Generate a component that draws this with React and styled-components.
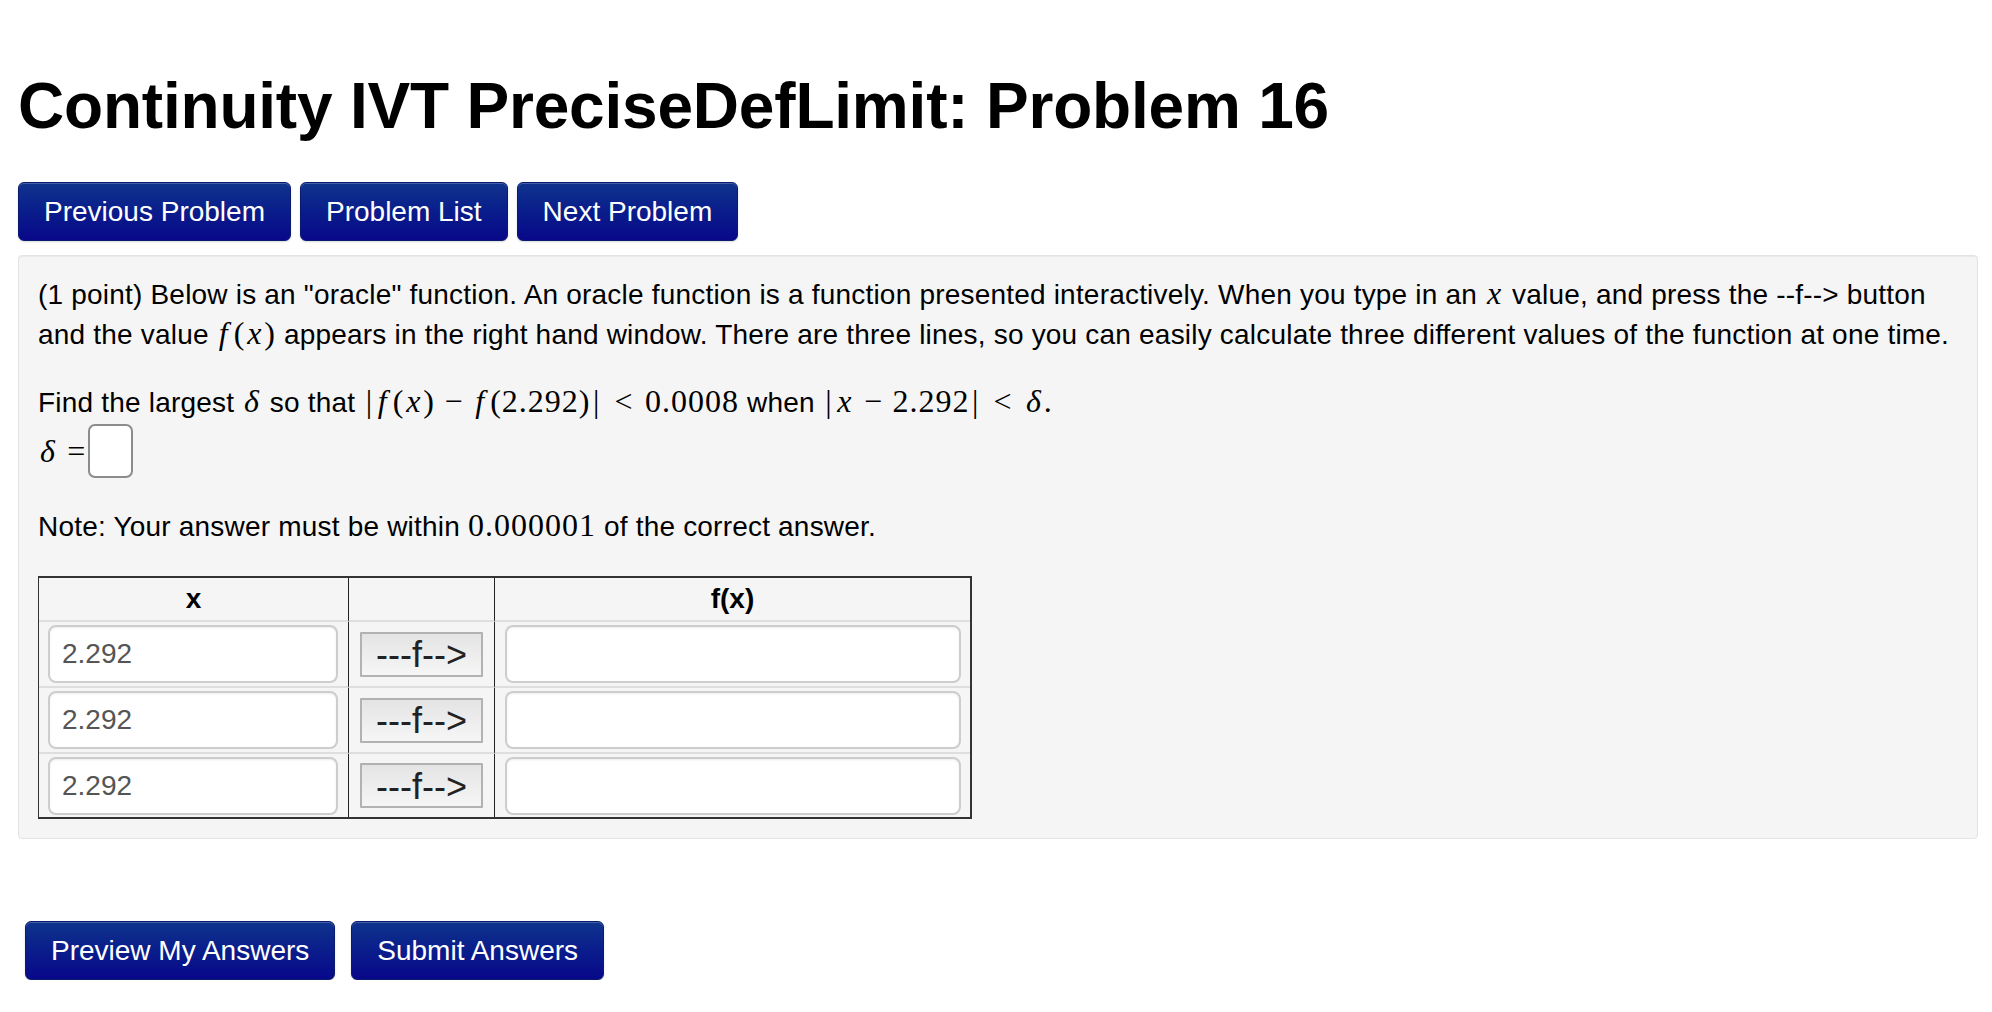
import React from 'react';
import styled, { createGlobalStyle } from 'styled-components';

const GlobalStyle = createGlobalStyle`
  html, body {
    margin: 0;
    padding: 0;
    background: #fff;
  }
  body {
    font-family: "Liberation Sans", Arial, Helvetica, sans-serif;
    color: #000;
  }
`;

const Page = styled.div`
  padding: 0 14px 0 18px;
`;

const Title = styled.h1`
  margin: 71px 0 0;
  font-size: 64px;
  line-height: 70px;
  font-weight: bold;
  letter-spacing: -0.2px;
`;

const NavRow = styled.div`
  display: flex;
  gap: 9px;
  margin-top: 41px;
`;

const BlueButton = styled.button`
  height: 59px;
  padding: 0 25px;
  border: 1px solid #0a1a6e;
  border-radius: 6px;
  background: linear-gradient(to bottom, #0f348d 0%, #0a1f8b 45%, #08088a 100%);
  box-shadow: inset 0 1px 0 rgba(255, 255, 255, 0.22), 0 1px 2px rgba(0, 0, 0, 0.15);
  color: #fff;
  font-family: "Liberation Sans", Arial, sans-serif;
  font-size: 28px;
  cursor: pointer;
`;

const ProblemBox = styled.div`
  margin-top: 14px;
  padding: 19px;
  background: #f5f5f5;
  border: 1px solid #e3e3e3;
  border-radius: 4px;
  box-shadow: inset 0 1px 1px rgba(0, 0, 0, 0.05);
  font-size: 28px;
  line-height: 40px;
  letter-spacing: 0.2px;
`;

const Para = styled.p`
  margin: ${p => p.top || 0}px 0 0;
`;

const Math = styled.span`
  font-family: "Liberation Serif", "Times New Roman", serif;
  font-size: 32px;
  line-height: 1;
  letter-spacing: 1px;
  white-space: nowrap;
`;

const V = styled.i`
  padding: 0 ${p => p.right || '0.06em'} 0 0.06em;
`;

const Bin = styled.span`
  margin: 0 0.3em;
`;

const Rel = styled.span`
  margin: 0 ${p => (p.tight ? '0 0 0.3em' : '0.36em')};
`;

const Bar = styled.span`
  padding: 0 0.08em;
`;

const AnswerRow = styled.div`
  display: flex;
  align-items: center;
  height: 54px;
  margin-top: 1px;
`;

const AnswerBox = styled.input`
  box-sizing: border-box;
  width: 45px;
  height: 54px;
  margin: 0 0 0 2px;
  border: 2px solid #8c8c8c;
  border-radius: 7px;
  background: #fff;
  font-size: 28px;
`;

const Grid = styled.div`
  display: grid;
  grid-template-columns: 310px 146px 475px;
  grid-template-rows: 44px 66px 66px 63px;
  width: 934px;
  box-sizing: border-box;
  margin-top: 29px;
  border-style: solid;
  border-color: #333;
  border-width: 2px 2px 2px 1px;
  letter-spacing: 0;
`;

const Cell = styled.div`
  box-sizing: border-box;
  display: flex;
  align-items: center;
  justify-content: center;
  padding: ${p => p.pad || '0'};
  border-right: ${p => (p.last ? 'none' : '1px solid #222')};
  border-bottom: ${p => (p.bottom ? 'none' : '2px solid #dedede')};
`;

const HeadCell = styled(Cell)`
  font-weight: bold;
  font-size: 28px;
  line-height: 40px;
`;

const OracleInput = styled.input`
  box-sizing: border-box;
  width: 100%;
  height: 58px;
  padding: 0 12px;
  border: 2px solid #cdcdcd;
  border-radius: 8px;
  background: #fff;
  box-shadow: inset 0 1px 2px rgba(0, 0, 0, 0.08);
  color: #555;
  font-family: "Liberation Sans", Arial, sans-serif;
  font-size: 28px;
  outline: none;
`;

const OracleButton = styled.button`
  box-sizing: border-box;
  width: 123px;
  height: 45px;
  padding: 2px 0 0;
  border: 2px solid #b2b2b2;
  border-radius: 1px;
  background: linear-gradient(to bottom, #e4e4e4, #f6f6f6);
  color: #222;
  font-family: "Liberation Sans", Arial, sans-serif;
  font-size: 36px;
  line-height: 1;
  cursor: pointer;
`;

const SubmitRow = styled.div`
  display: flex;
  gap: 16px;
  margin-top: 82px;
  padding-left: 7px;
`;

const rows = [1, 2, 3];

export default function App() {
  return (
    <Page>
      <GlobalStyle />
      <Title>Continuity IVT PreciseDefLimit: Problem 16</Title>

      <NavRow>
        <BlueButton>Previous Problem</BlueButton>
        <BlueButton>Problem List</BlueButton>
        <BlueButton>Next Problem</BlueButton>
      </NavRow>

      <ProblemBox>
        <Para>
          (1 point) Below is an "oracle" function. An oracle function is a function presented
          interactively. When you type in an <Math><V>x</V></Math> value, and press the --f--&gt; button
          and the value <Math><V right="0.16em">f</V>(<V>x</V>)</Math> appears in the right hand window. There
          are three lines, so you can easily calculate three different values of the function at one time.
        </Para>

        <Para top={28}>
          Find the largest <Math><V>δ</V></Math> so that{' '}
          <Math>
            <Bar>|</Bar><V right="0.16em">f</V>(<V>x</V>)<Bin>−</Bin><V right="0.16em">f</V>(2.292)<Bar>|</Bar>
            <Rel>&lt;</Rel>0.0008
          </Math>{' '}
          when{' '}
          <Math>
            <Bar>|</Bar><V>x</V><Bin>−</Bin>2.292<Bar>|</Bar><Rel>&lt;</Rel><V>δ</V>.
          </Math>
        </Para>
        <AnswerRow>
          <Math><V>δ</V><Rel tight>=</Rel></Math>
          <AnswerBox type="text" />
        </AnswerRow>

        <Para top={29}>
          Note: Your answer must be within <Math>0.000001</Math> of the correct answer.
        </Para>

        <Grid>
          <HeadCell>x</HeadCell>
          <HeadCell />
          <HeadCell last>f(x)</HeadCell>
          {rows.map(r => (
            <React.Fragment key={r}>
              <Cell pad="0 10px 0 9px" bottom={r === 3}>
                <OracleInput type="text" defaultValue="2.292" />
              </Cell>
              <Cell bottom={r === 3}>
                <OracleButton type="button">---f--&gt;</OracleButton>
              </Cell>
              <Cell pad="0 9px 0 10px" last bottom={r === 3}>
                <OracleInput type="text" />
              </Cell>
            </React.Fragment>
          ))}
        </Grid>
      </ProblemBox>

      <SubmitRow>
        <BlueButton>Preview My Answers</BlueButton>
        <BlueButton>Submit Answers</BlueButton>
      </SubmitRow>
    </Page>
  );
}
